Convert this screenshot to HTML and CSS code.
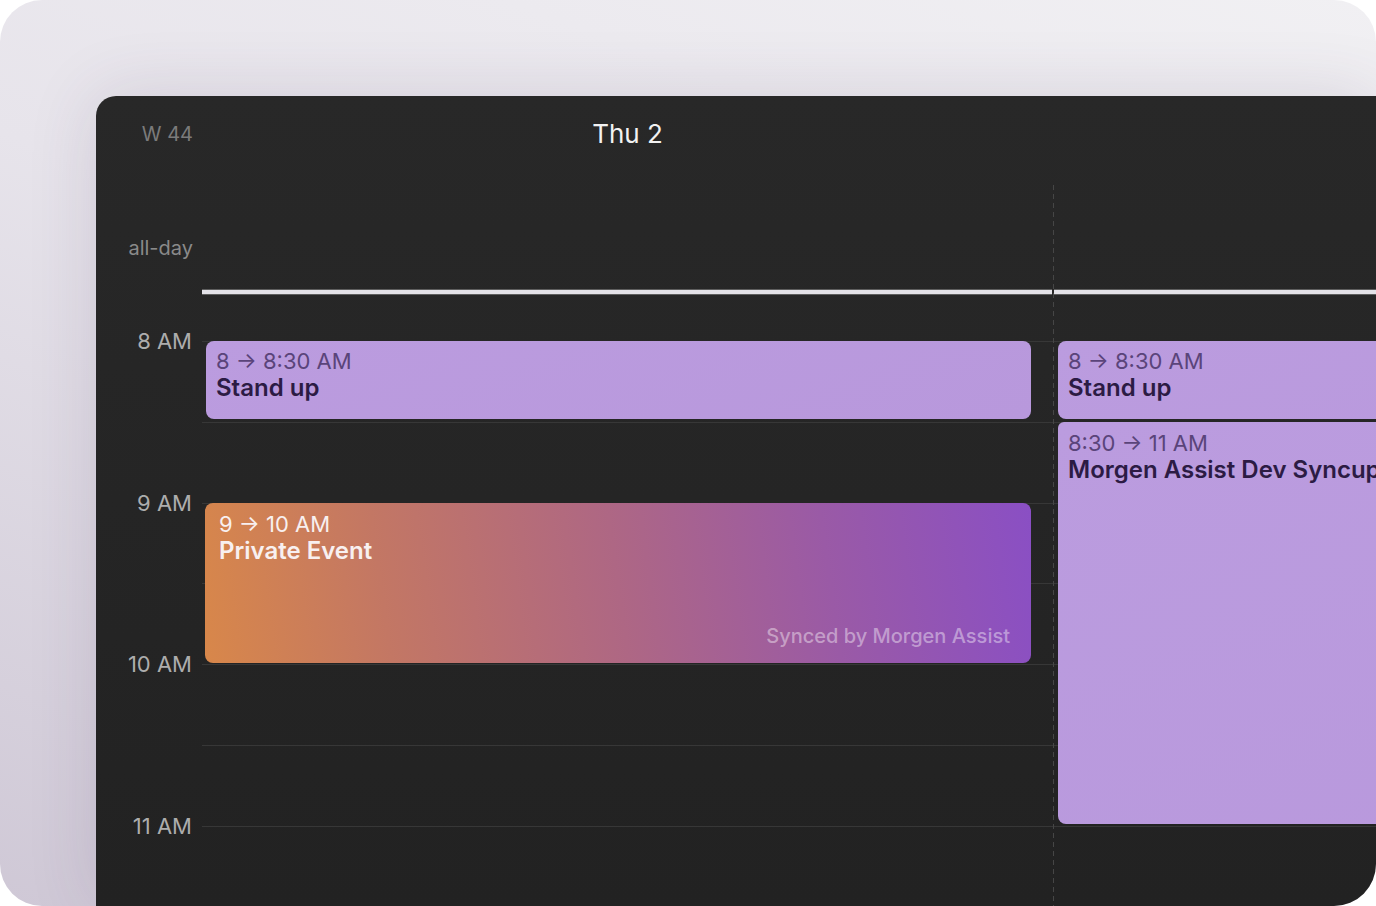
FILE: index.html
```html
<!DOCTYPE html>
<html lang="en">
<head>
<meta charset="utf-8">
<title>Calendar</title>
<link rel="stylesheet" href="styles.css">
</head>
<body>
<div class="frame">
  <div class="app">
    <div class="gutter-head">W 44</div>
    <div class="day-head">Thu 2</div>
    <div class="day-head"></div>

    <div class="gutter">
      <div class="allday-label">all-day</div>
      <div class="bar-spacer"></div>
      <div class="hours">
        <div class="hour">8 AM</div>
        <div class="hour">9 AM</div>
        <div class="hour">10 AM</div>
        <div class="hour">11 AM</div>
      </div>
    </div>

    <div class="day">
      <div class="allday"></div>
      <div class="bar"></div>
      <div class="grid">
        <div class="slot"></div>
        <div class="slot"></div>
        <div class="slot"></div>
        <div class="slot"></div>
        <div class="slot"></div>
        <div class="slot"></div>
        <div class="slot"></div>
        <div class="events">
          <div class="event lilac standup-a">
            <div class="ev-time">8 → 8:30 AM</div>
            <div class="ev-title">Stand up</div>
          </div>
          <div class="event private">
            <div class="ev-time">9 → 10 AM</div>
            <div class="ev-title">Private Event</div>
            <div class="synced">Synced by Morgen Assist</div>
          </div>
        </div>
      </div>
    </div>

    <div class="day day-next">
      <div class="allday"></div>
      <div class="bar"></div>
      <div class="grid">
        <div class="slot"></div>
        <div class="slot"></div>
        <div class="slot"></div>
        <div class="slot"></div>
        <div class="slot"></div>
        <div class="slot"></div>
        <div class="slot"></div>
        <div class="events">
          <div class="event lilac standup-b">
            <div class="ev-time">8 → 8:30 AM</div>
            <div class="ev-title">Stand up</div>
          </div>
          <div class="event lilac syncup">
            <div class="ev-time">8:30 → 11 AM</div>
            <div class="ev-title">Morgen Assist Dev Syncup</div>
          </div>
        </div>
      </div>
    </div>
  </div>
</div>
</body>
</html>
```
FILE: styles.css
```css
html, body {
  margin: 0;
  padding: 0;
  background: #ffffff;
}

body {
  font-family: Inter, "Noto Sans", "Liberation Sans", sans-serif;
}

.frame {
  width: 1376px;
  height: 906px;
  box-sizing: border-box;
  padding: 96px 0 0 96px;
  border-radius: 42px;
  overflow: hidden;
  background: linear-gradient(200deg, #f1f0f3 0%, #e7e4eb 45%, #cfc8d6 100%);
}

.app {
  width: 1280px;
  height: 810px;
  border-top-left-radius: 20px;
  overflow: hidden;
  background: linear-gradient(180deg, #282828 0%, #222222 100%);
  box-shadow: 0 0 70px rgba(70, 50, 90, 0.14);
  display: grid;
  grid-template-columns: 106px 851px 851px;
  grid-template-rows: 89px 1fr;
}

.gutter-head {
  padding: 24px 9px 0 0;
  text-align: right;
  font-size: 20px;
  line-height: 28px;
  color: #7b7b7b;
}

.day-head {
  padding-top: 22px;
  text-align: center;
  font-size: 26px;
  line-height: 32px;
  color: #f2f2f2;
}

.gutter {
  text-align: right;
}

.allday-label {
  height: 104px;
  box-sizing: border-box;
  padding: 51px 9px 0 0;
  font-size: 20px;
  line-height: 24px;
  color: #8a8a8a;
}

.bar-spacer {
  height: 6px;
}

.hours {
  padding-top: 34px;
}

.hour {
  height: 161.5px;
  padding-right: 10px;
  font-size: 22px;
  line-height: 24px;
  color: #adadad;
}

.day {
  position: relative;
}

.day-next {
  background: repeating-linear-gradient(to bottom, #464646 0 5px, transparent 5px 9px) left top / 1px 100% no-repeat;
}

.allday {
  height: 104px;
}

.bar {
  height: 4px;
  background: #e4e2e8;
  border-top: 1px solid #5e5e5e;
  border-bottom: 1px solid #5e5e5e;
  margin-right: 1px;
}

.day-next .bar {
  margin-left: 1px;
  margin-right: 0;
}

.grid {
  position: relative;
  padding-top: 46px;
}

.day-next .grid {
  margin-left: 1px;
}

.slot {
  height: 80.8px;
  box-sizing: border-box;
  border-top: 1px solid #373737;
}

.events {
  position: absolute;
  top: 46px;
  left: 0;
  right: 0;
}

.event {
  position: absolute;
  box-sizing: border-box;
  border-radius: 8px;
  overflow: hidden;
  white-space: nowrap;
}

.ev-time {
  font-size: 22px;
  line-height: 26px;
}

.ev-title {
  font-size: 24px;
  line-height: 28px;
  font-weight: 600;
}

.lilac {
  background: linear-gradient(160deg, #bb9cdf 0%, #b898dc 100%);
  color: #2c1b44;
  padding: 7px 10px 0;
}

.lilac .ev-time {
  color: #5a447a;
}

.standup-a {
  left: 4px;
  top: 0;
  width: 825px;
  height: 78px;
}

.standup-b {
  left: 4px;
  top: 0;
  right: 4px;
  height: 78px;
}

.syncup {
  left: 4px;
  top: 81px;
  right: 4px;
  height: 402px;
  padding-top: 8px;
  border-top-left-radius: 6px;
}

.private {
  left: 3px;
  top: 162px;
  width: 826px;
  height: 160px;
  padding: 8px 14px 0;
  color: #f8f0f0;
  background: linear-gradient(82deg, #d8874a 0%, #c37764 22%, #ae6784 50%, #9a5aa6 75%, #8a4fc4 100%);
}

.synced {
  position: absolute;
  right: 21px;
  bottom: 15px;
  font-size: 20px;
  line-height: 24px;
  font-weight: 500;
  color: rgba(255, 255, 255, 0.42);
}
```
